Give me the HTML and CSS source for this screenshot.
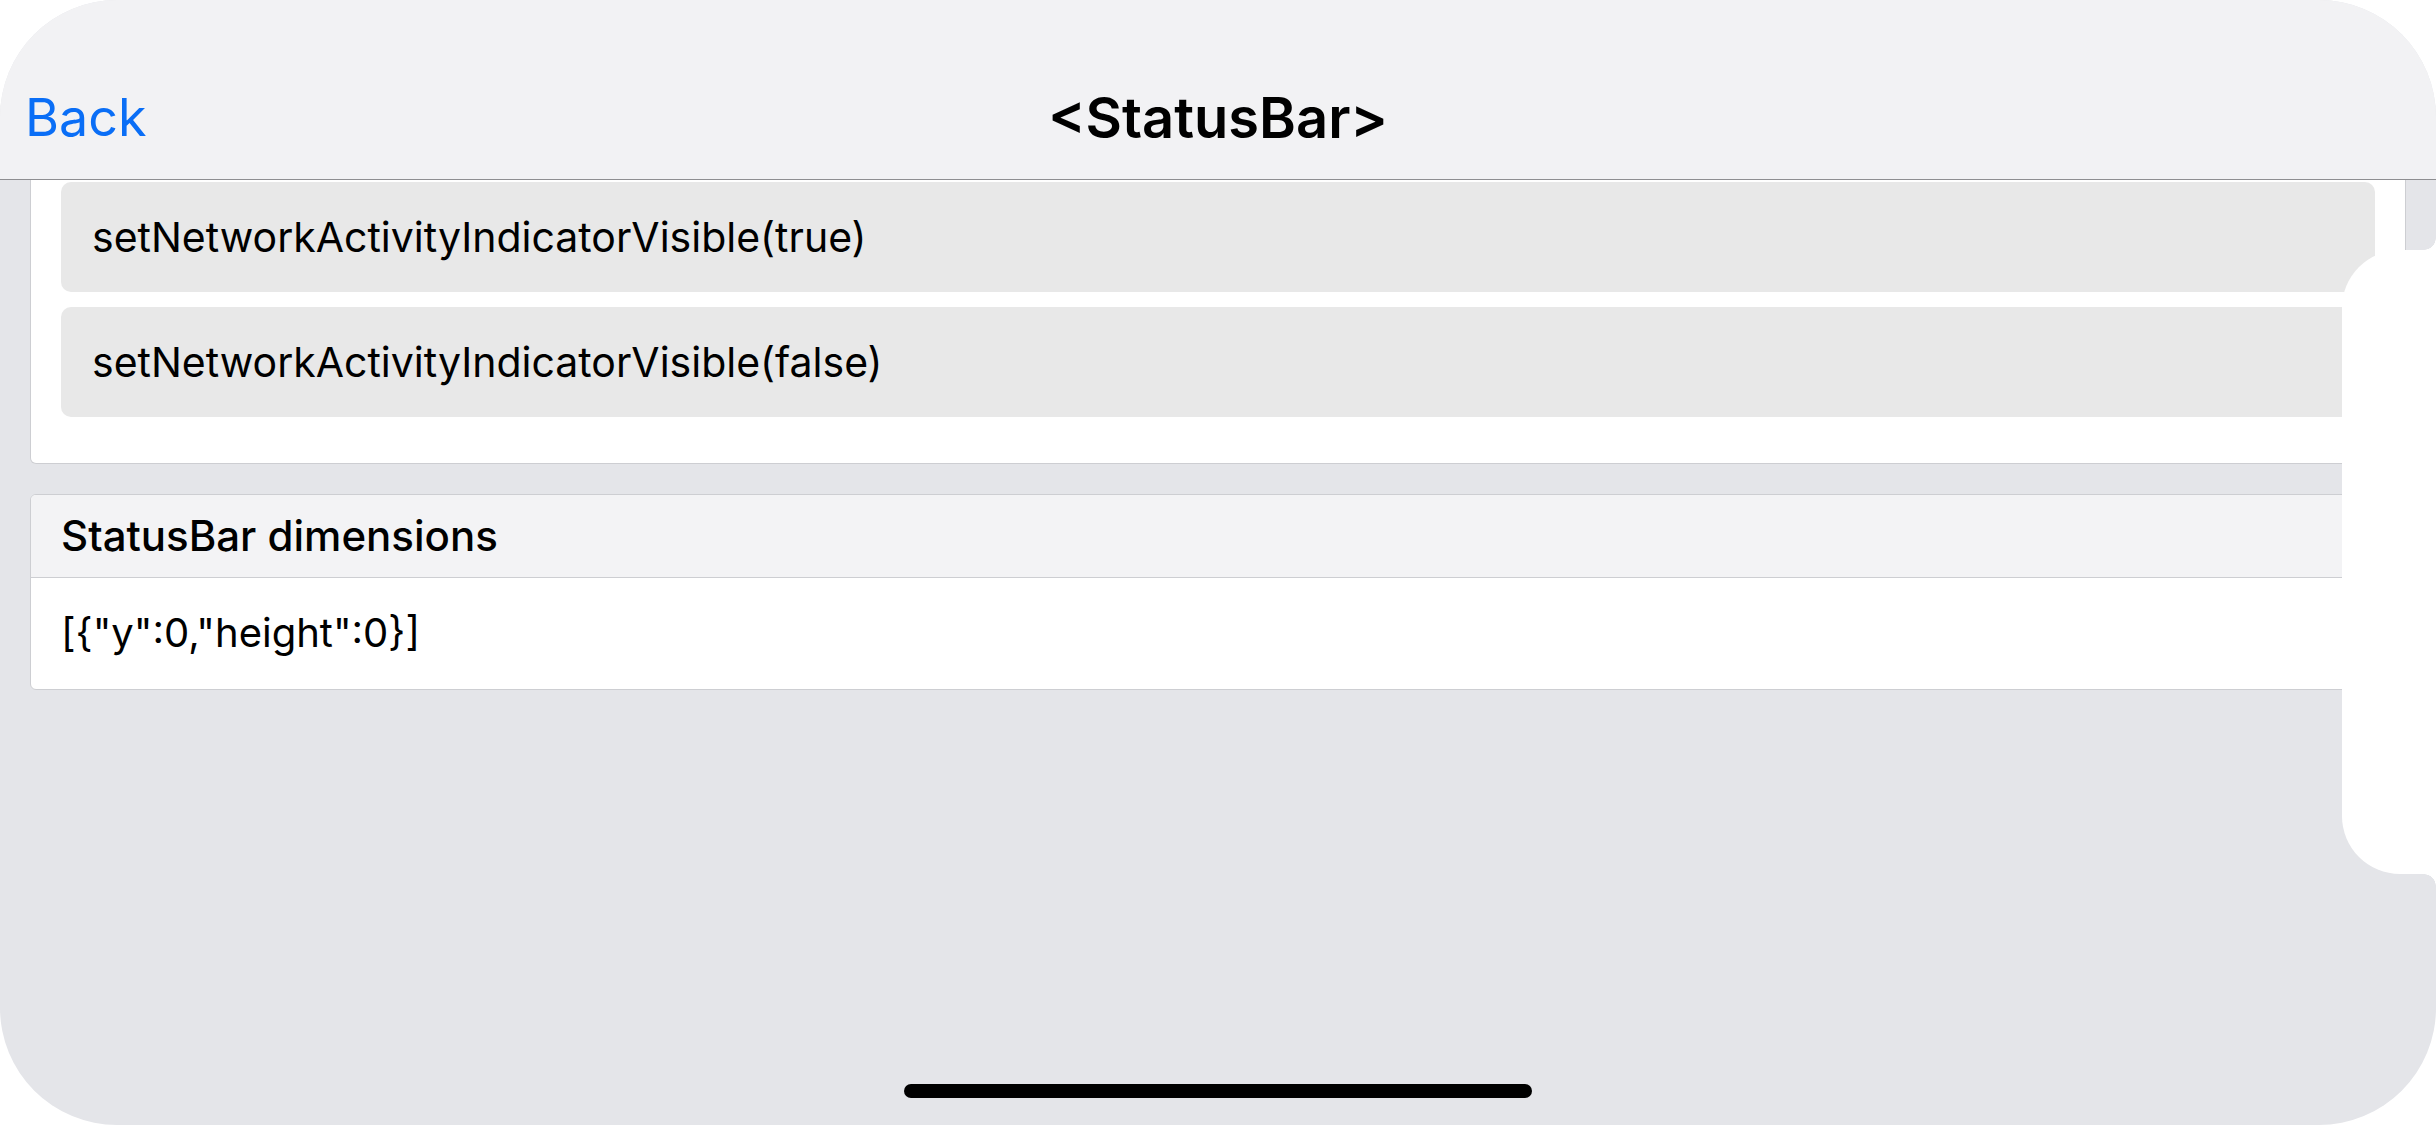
FILE: index.html
```html
<!DOCTYPE html>
<html lang="en">
<head>
  <meta charset="UTF-8" />
  <title>StatusBar</title>
  <link rel="stylesheet" href="styles.css">
</head>
<body>

<div class="screen">

  <!-- Navigation bar -->
  <div class="navbar">
    <span class="nav-back">Back</span>
    <span class="nav-title">&lt;StatusBar&gt;</span>
  </div>

  <!-- Scrolled content -->
  <div class="content">

    <!-- Network activity card (scrolled, top hidden under nav) -->
    <div class="card card-scrolled">
      <div class="card-body">
        <div class="btn">setNetworkActivityIndicatorVisible(true)</div>
        <div class="btn">setNetworkActivityIndicatorVisible(false)</div>
      </div>
    </div>

    <!-- Dimensions card -->
    <div class="card">
      <div class="card-header">StatusBar dimensions</div>
      <div class="card-text">[{"y":0,"height":0}]</div>
    </div>

  </div>

  <!-- Sensor housing (landscape) -->
  <div class="notch"></div>

  <!-- Home indicator -->
  <div class="home-indicator"></div>
</div>

</body>
</html>
```

FILE: styles.css
```css
body {
  margin: 0;
  background-color: #ffffff;
  font-family: "Inter", "Noto Sans", sans-serif;
  color: #000000;
}

.screen {
  position: relative;
  width: 2436px;
  height: 1125px;
  border-radius: 117px;
  overflow: hidden;
  background-color: #e4e5e9;
}

/* NAV BAR */
.navbar {
  position: relative;
  height: 123px;
  padding-top: 56px;
  display: flex;
  align-items: center;
  justify-content: center;
  background-color: #f2f2f4;
  border-bottom: 1px solid #8e8e91;
}
.nav-back {
  position: absolute;
  left: 25px;
  font-size: 52px;
  color: #0a6ef6;
}
.nav-title {
  font-size: 56px;
  font-weight: 600;
}

/* CONTENT */
.content {
  padding: 0 30px;
}

.card {
  background-color: #ffffff;
  border: 1px solid #cdced2;
  border-radius: 6px;
  margin-top: 30px;
  overflow: hidden;
}
.card-scrolled {
  margin-top: 0;
  border-top: none;
  border-radius: 0 0 6px 6px;
}
.card-body {
  padding: 2px 30px 31px;
}

.btn {
  margin-bottom: 15px;
  padding: 30px 31px;
  background-color: #e8e8e8;
  border-radius: 10px;
  font-size: 41px;
  line-height: 50px;
}

.card-header {
  padding: 15px 30px 16px;
  background-color: #f3f3f5;
  border-bottom: 1px solid #cdced2;
  font-size: 42px;
  font-weight: 500;
  line-height: 51px;
}
.card-text {
  padding: 30px 30px 31px;
  font-size: 40px;
  line-height: 50px;
}

/* Sensor housing cut-out on the right edge */
.notch {
  position: absolute;
  top: 250px;
  right: 0;
  width: 94px;
  height: 624px;
  background-color: #ffffff;
  border-radius: 58px 0 0 58px;
}
.notch::before,
.notch::after {
  content: "";
  position: absolute;
  right: 0;
  width: 12px;
  height: 12px;
}
.notch::before {
  top: -12px;
  background: radial-gradient(circle 12px at 0 0, transparent 11.5px, #ffffff 12px);
}
.notch::after {
  bottom: -12px;
  background: radial-gradient(circle 12px at 0 100%, transparent 11.5px, #ffffff 12px);
}

.home-indicator {
  position: absolute;
  left: 904px;
  bottom: 27px;
  width: 628px;
  height: 14px;
  border-radius: 7px;
  background-color: #000000;
}
```
